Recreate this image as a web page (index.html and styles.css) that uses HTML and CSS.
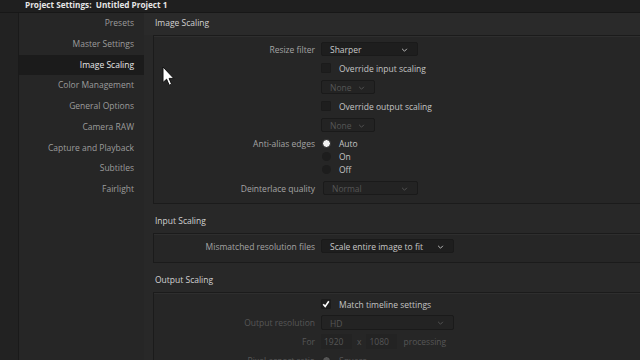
FILE: index.html
```html
<!DOCTYPE html>
<html lang="en">
<head>
    <meta charset="UTF-8" />
    <title>Project Settings</title>
    <link rel="stylesheet" href="styles.css">
</head>
<body>
<div class="titlebar">Project Settings:&nbsp; Untitled Project 1</div>

<div class="window">
    <div class="gutter"></div>

    <!-- Settings categories -->
    <nav class="sidebar">
        <div class="nav-item">Presets</div>
        <div class="nav-item">Master Settings</div>
        <div class="nav-item active">Image Scaling</div>
        <div class="nav-item">Color Management</div>
        <div class="nav-item">General Options</div>
        <div class="nav-item">Camera RAW</div>
        <div class="nav-item">Capture and Playback</div>
        <div class="nav-item">Subtitles</div>
        <div class="nav-item">Fairlight</div>
    </nav>

    <main class="content">
        <div class="section-title first">Image Scaling</div>
        <div class="panel">
            <div class="row">
                <span class="label">Resize filter</span>
                <div class="select w-97">Sharper<svg class="chev" viewBox="0 0 8 5"><polyline points="1,1 4,4 7,1"/></svg></div>
            </div>
            <div class="row">
                <span class="label"></span>
                <span class="check"></span><span class="opt">Override input scaling</span>
            </div>
            <div class="row">
                <span class="label"></span>
                <div class="select w-54 off">None<svg class="chev" viewBox="0 0 8 5"><polyline points="1,1 4,4 7,1"/></svg></div>
            </div>
            <div class="row">
                <span class="label"></span>
                <span class="check"></span><span class="opt">Override output scaling</span>
            </div>
            <div class="row">
                <span class="label"></span>
                <div class="select w-54 off">None<svg class="chev" viewBox="0 0 8 5"><polyline points="1,1 4,4 7,1"/></svg></div>
            </div>
            <div class="row group">
                <span class="label">Anti-alias edges</span>
                <div class="radios">
                    <div class="radio-line"><span class="radio on"></span><span class="opt">Auto</span></div>
                    <div class="radio-line"><span class="radio"></span><span class="opt">On</span></div>
                    <div class="radio-line"><span class="radio"></span><span class="opt">Off</span></div>
                </div>
            </div>
            <div class="row">
                <span class="label">Deinterlace quality</span>
                <div class="select w-95 off shift">Normal<svg class="chev" viewBox="0 0 8 5"><polyline points="1,1 4,4 7,1"/></svg></div>
            </div>
        </div>

        <div class="section-title">Input Scaling</div>
        <div class="panel small">
            <div class="row">
                <span class="label">Mismatched resolution files</span>
                <div class="select w-133">Scale entire image to fit<svg class="chev" viewBox="0 0 8 5"><polyline points="1,1 4,4 7,1"/></svg></div>
            </div>
        </div>

        <div class="section-title">Output Scaling</div>
        <div class="panel out">
            <div class="row">
                <span class="label"></span>
                <span class="check checked"><svg viewBox="0 0 10 10"><polyline points="2.2,5.2 4.2,7.4 7.8,2.2"/></svg></span><span class="opt">Match timeline settings</span>
            </div>
            <div class="row tall">
                <span class="label dim">Output resolution</span>
                <div class="select w-133 off">HD<svg class="chev" viewBox="0 0 8 5"><polyline points="1,1 4,4 7,1"/></svg></div>
            </div>
            <div class="row tall">
                <span class="label dim">For</span>
                <span class="field">1920</span>
                <span class="opt dim times">x</span>
                <span class="field">1080</span>
                <span class="opt dim">processing</span>
            </div>
            <div class="row">
                <span class="label dim">Pixel aspect ratio</span>
                <span class="radio on dim-radio"></span><span class="opt dim">Square</span>
            </div>
        </div>
    </main>
</div>

<!-- mouse pointer -->
<svg class="cursor" viewBox="0 0 13 21">
    <path d="M1 1 L1 16.5 L4.6 13.2 L7.2 19.2 L9.6 18.2 L7.1 12.4 L11.8 12.4 Z" />
</svg>
</body>
</html>
```

FILE: styles.css
```css
body {
    margin: 0;
    width: 640px;
    height: 360px;
    overflow: hidden;
    background-color: #282828;
    font-family: "Open Sans", "Noto Sans", sans-serif;
    font-size: 8.5px;
    color: #a4a4a4;
    position: relative;
}

.titlebar {
    height: 12px;
    line-height: 10px;
    padding-left: 25px;
    background-color: #1f1f1f;
    border-bottom: 1px solid #171717;
    color: #e6e6e6;
    font-weight: bold;
    font-size: 8.2px;
    overflow: hidden;
}

.window {
    display: flex;
    height: 347px;
}

.gutter {
    width: 18px;
    background-color: #222;
    border-right: 1px solid #1a1a1a;
}

/* Barra lateral */
.sidebar {
    width: 125px;
    background-color: #262626;
}

.nav-item {
    height: 20.75px;
    line-height: 20.75px;
    text-align: right;
    padding-right: 10px;
    color: #9c9c9c;
    white-space: nowrap;
}

.nav-item.active {
    background-color: #1b1b1b;
    color: #e8e8e8;
}

.content {
    flex: 1;
    overflow: hidden;
    padding-left: 9px;
}

.section-title {
    padding: 11px 0 6px 2px;
    line-height: 12px;
    color: #d2d2d2;
}

.section-title.first {
    padding-top: 4px;
    margin-left: -9px;
    padding-left: 11px;
    background-color: #2a2a2a;
}

.panel {
    margin-right: -10px;
    background-color: #262626;
    border: 1px solid #1b1b1b;
    box-shadow: inset 0 1px 0 #2e2e2e;
    padding: 6px 0 8px;
    display: flex;
    flex-direction: column;
    gap: 5px;
}

.panel.small {
    padding: 5px 0 9px;
}

.panel.out {
    padding-top: 4px;
    gap: 4px;
}

.row {
    display: flex;
    align-items: center;
    height: 14px;
    gap: 6px;
    white-space: nowrap;
}

.row.tall {
    height: 15px;
}

.row.group {
    height: auto;
    align-items: flex-start;
}

.label {
    width: 161px;
    flex: none;
    text-align: right;
    line-height: 13px;
    color: #a4a4a4;
}

.dim {
    color: #565656 !important;
}

.opt {
    color: #c4c4c4;
    line-height: 13px;
}

.select {
    position: relative;
    height: 14px;
    line-height: 14px;
    box-sizing: border-box;
    padding-left: 8px;
    background-color: #1e1e1e;
    border: 1px solid #1a1a1a;
    border-radius: 2px;
    color: #c8c8c8;
}

.select.off {
    background-color: #232323;
    color: #565656;
}

.select.shift {
    margin-left: 2px;
}

.row.tall .select {
    height: 15px;
    line-height: 15px;
}

.w-54 { width: 54px; }
.w-95 { width: 95px; }
.w-97 { width: 97px; }
.w-133 { width: 133px; }

.chev {
    position: absolute;
    right: 9px;
    top: 5px;
    width: 7px;
    height: 4px;
    fill: none;
    stroke: #c0c0c0;
    stroke-width: 1.2;
}

.select.off .chev {
    stroke: #555;
}

.check {
    width: 10px;
    height: 10px;
    box-sizing: border-box;
    background-color: #1e1e1e;
    border: 1px solid #1b1b1b;
    border-radius: 1px;
    margin-right: 2px;
    display: flex;
}

.check svg {
    width: 10px;
    height: 10px;
    margin: -1px;
    fill: none;
    stroke: #fff;
    stroke-width: 1.6;
}

.radios {
    display: flex;
    flex-direction: column;
}

.radio-line {
    display: flex;
    align-items: center;
    height: 13px;
    gap: 8px;
}

.radio {
    width: 9px;
    height: 9px;
    margin-left: 1px;
    border-radius: 50%;
    background-color: #1d1d1d;
    box-sizing: border-box;
}

.radio.on {
    background-color: #f2f2f2;
    border: 1.5px solid #1d1d1d;
}

.radio.dim-radio {
    background-color: #555;
    margin-right: 2px;
}

.field {
    width: 31px;
    height: 15px;
    line-height: 15px;
    padding-left: 3px;
    box-sizing: border-box;
    background-color: #232323;
    color: #565656;
}

.times {
    margin: 0 -1px;
}

.cursor {
    position: absolute;
    left: 162px;
    top: 66px;
    width: 13px;
    height: 21px;
    fill: #fff;
    stroke: #111;
    stroke-width: 1;
}
```
